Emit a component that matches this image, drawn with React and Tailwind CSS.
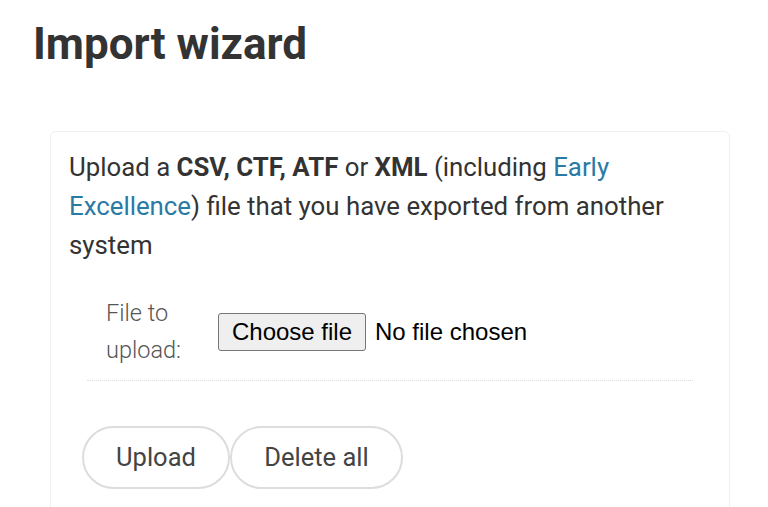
export default function App() {
  return (
    <div className="min-h-[507px] bg-white overflow-hidden" style={{ fontFamily: "Roboto, 'Liberation Sans', sans-serif" }}>
      <div className="h-[507px] overflow-hidden">
        <h1 className="pl-[33px] pt-[16px] text-[44px] leading-[56px] font-bold text-[#333333]">Import wizard</h1>
        <div className="ml-[50px] mr-[38px] mt-[59px] rounded-[6px] border border-[#efefef] px-[18px] pt-[16px] h-[420px]">
          <p className="text-[25.8px] leading-[39px] text-[#333333]">
            Upload a <b>CSV, CTF, ATF</b> or <b>XML</b> (including <a className="text-[#2a7aa6]">Early Excellence</a>) file that you have exported from another system
          </p>
          <div className="mx-[18px] mt-[30px] flex items-center border-b border-dotted border-[#dddddd] pb-[11px]">
            <div className="w-[131px] pl-[19px] text-[23.5px] leading-[37px] text-[#555555] font-light">File to upload:</div>
            <div className="flex items-center" style={{ fontFamily: "'Liberation Sans', Arial, sans-serif" }}>
              <span className="h-[38px] w-[148px] flex items-center justify-center rounded-[3px] border border-[#767676] bg-[#efefef] text-[24px] text-black">Choose file</span>
              <span className="ml-[9px] text-[24px] text-black">No file chosen</span>
            </div>
          </div>
          <div className="mt-[45px] flex pl-[13px]">
            <button className="h-[63px] w-[148px] rounded-full border-2 border-[#dddddd] text-[25.5px] text-[#444444]">Upload</button>
            <button className="h-[63px] w-[173px] rounded-full border-2 border-[#dddddd] text-[25.5px] text-[#444444]">Delete all</button>
          </div>
        </div>
      </div>
    </div>
  );
}
